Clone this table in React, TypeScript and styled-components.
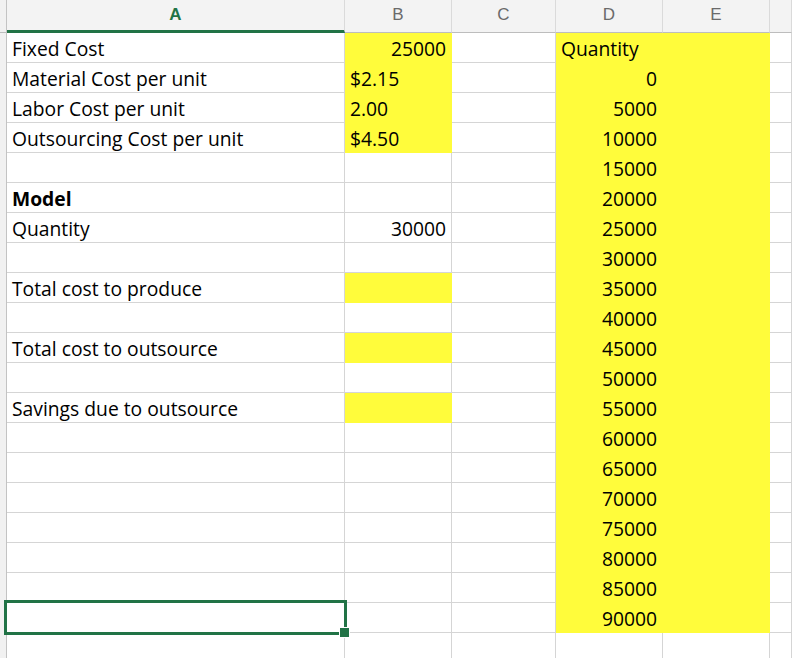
import React from "react";
import styled, { createGlobalStyle, css } from "styled-components";

const GlobalStyle = createGlobalStyle`
  html, body { margin: 0; padding: 0; background: #ffffff; overflow: hidden; }
  body { width: 792px; height: 658px; }
`;

const YELLOW = "#FFFC3B";
const GRID = "#D5D5D5";
const GREEN = "#217346";

const Sheet = styled.div`
  display: grid;
  grid-template-columns: 7px 338px 107px 104px 107px 107px 22px;
  grid-auto-rows: 30px;
  grid-template-rows: 33px;
  width: 792px;
  height: 658px;
  overflow: hidden;
  font-family: "Open Sans", Lato, sans-serif;
  font-size: 19.3px;
  color: #000;
`;

const Corner = styled.div`
  background: #f1f1f1;
  border-right: 1px solid #c3c3c3;
  border-bottom: 1px solid #bdbdbd;
`;

const ColHeader = styled.div<{ $active?: boolean }>`
  box-sizing: border-box;
  background: #f3f3f3;
  border-right: 1px solid #dadada;
  border-bottom: ${(p) => (p.$active ? `3px solid ${GREEN}` : "1px solid #bdbdbd")};
  display: flex;
  align-items: center;
  justify-content: center;
  padding-bottom: ${(p) => (p.$active ? "0px" : "2px")};
  font-family: "Liberation Sans", Arial, sans-serif;
  font-size: 17px;
  color: ${(p) => (p.$active ? GREEN : "#6a6a6a")};
  font-weight: ${(p) => (p.$active ? 700 : 400)};
`;

const RowHeader = styled.div`
  background: #f1f1f1;
  border-right: 1px solid #c3c3c3;
`;

const Cell = styled.div<{ $fill?: boolean; $align?: "left" | "right"; $bold?: boolean }>`
  position: relative;
  box-sizing: border-box;
  border-right: 1px solid ${GRID};
  border-bottom: 1px solid ${GRID};
  padding: 1px 5px 0 5px;
  display: flex;
  align-items: center;
  justify-content: ${(p) => (p.$align === "right" ? "flex-end" : "flex-start")};
  white-space: nowrap;
  font-weight: ${(p) => (p.$bold ? 700 : 400)};
  ${(p) =>
    p.$fill &&
    css`
      background: ${YELLOW};
      border-right-color: ${YELLOW};
      border-bottom-color: ${YELLOW};
    `}
`;

const Selection = styled.div`
  position: absolute;
  z-index: 5;
  left: -3px;
  top: -3px;
  right: -3px;
  bottom: -3px;
  border: 3px solid ${GREEN};
  pointer-events: none;
`;

const FillHandle = styled.div`
  position: absolute;
  right: -6px;
  bottom: -6px;
  width: 9px;
  height: 9px;
  background: ${GREEN};
  border: 1px solid #ffffff;
  box-sizing: content-box;
`;

type CellData = { v?: string; align?: "left" | "right"; fill?: boolean; bold?: boolean };

const quantities = [
  "0", "5000", "10000", "15000", "20000", "25000", "30000", "35000", "40000",
  "45000", "50000", "55000", "60000", "65000", "70000", "75000", "80000", "85000", "90000",
];

const colA: Record<number, CellData> = {
  1: { v: "Fixed Cost" },
  2: { v: "Material Cost per unit" },
  3: { v: "Labor Cost per unit" },
  4: { v: "Outsourcing Cost per unit" },
  6: { v: "Model", bold: true },
  7: { v: "Quantity" },
  9: { v: "Total cost to produce" },
  11: { v: "Total cost to outsource" },
  13: { v: "Savings due to outsource" },
};

const colB: Record<number, CellData> = {
  1: { v: "25000", align: "right", fill: true },
  2: { v: "$2.15", fill: true },
  3: { v: "2.00", fill: true },
  4: { v: "$4.50", fill: true },
  7: { v: "30000", align: "right" },
  9: { fill: true },
  11: { fill: true },
  13: { fill: true },
};

function rowCells(r: number): CellData[] {
  const a = colA[r] || {};
  const b = colB[r] || {};
  const c: CellData = {};
  let d: CellData = {};
  let e: CellData = {};
  if (r >= 1 && r <= 20) {
    e = { fill: true };
    if (r === 1) d = { v: "Quantity", fill: true };
    else d = { v: quantities[r - 2], align: "right", fill: true };
  }
  const f: CellData = {};
  return [a, b, c, d, e, f];
}

const columns = ["A", "B", "C", "D", "E", ""];
const rows = Array.from({ length: 21 }, (_, i) => i + 1);

export default function App() {
  return (
    <>
      <GlobalStyle />
      <Sheet>
        <Corner />
        {columns.map((c) => (
          <ColHeader key={c || "F"} $active={c === "A"}>
            {c}
          </ColHeader>
        ))}
        {rows.map((r) => (
          <React.Fragment key={r}>
            <RowHeader />
            {rowCells(r).map((cell, ci) => (
              <Cell key={ci} $fill={cell.fill} $align={cell.align} $bold={cell.bold}>
                {cell.v}
                {r === 20 && ci === 0 && (
                  <Selection>
                    <FillHandle />
                  </Selection>
                )}
              </Cell>
            ))}
          </React.Fragment>
        ))}
      </Sheet>
    </>
  );
}
